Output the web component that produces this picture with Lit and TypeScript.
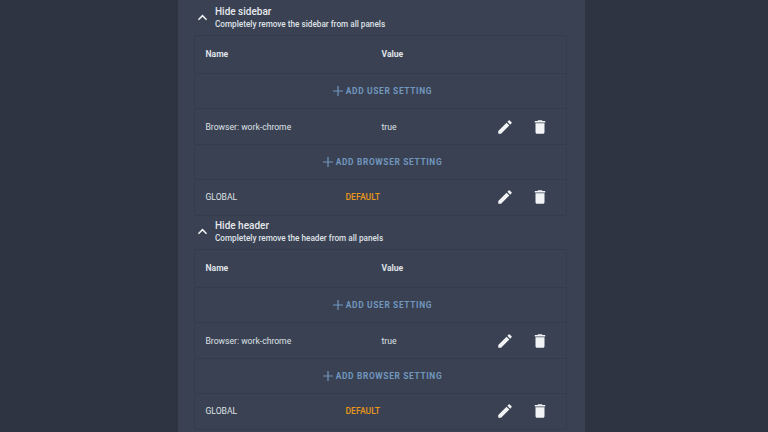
import { LitElement, css, html } from "lit";
import { customElement, property } from "lit/decorators.js";

const pencil = html`<svg viewBox="0 0 24 24" width="18" height="18"><path fill="currentColor" d="M3 17.25V21h3.75L17.81 9.94l-3.75-3.75L3 17.25zM20.71 7.04a1 1 0 0 0 0-1.41l-2.34-2.34a1 1 0 0 0-1.41 0l-1.83 1.83 3.75 3.75 1.83-1.83z"/></svg>`;
const trash = html`<svg viewBox="0 0 24 24" width="18" height="18"><path fill="currentColor" d="M6 19c0 1.1.9 2 2 2h8c1.1 0 2-.9 2-2V7H6v12zM19 4h-3.5l-1-1h-5l-1 1H5v2h14V4z"/></svg>`;
const plus = html`<svg viewBox="0 0 24 24" width="12" height="12"><path fill="currentColor" d="M22 13.2h-8.8V22h-2.4v-8.8H2v-2.4h8.8V2h2.4v8.8H22z"/></svg>`;
const chevron = html`<svg viewBox="0 0 24 24" width="15" height="15"><path fill="none" stroke="currentColor" stroke-width="2.4" d="M5.5 15.5 12 9l6.5 6.5"/></svg>`;

@customElement("setting-block")
export class SettingBlock extends LitElement {
  static styles = css`
    :host {
      display: block;
      height: 214px;
    }
    .head {
      display: flex;
      align-items: center;
      height: 34.5px;
      padding-top: 1px;
      box-sizing: border-box;
    }
    .chevron {
      width: 37px;
      padding-left: 16.5px;
      box-sizing: border-box;
      color: #f2f3f5;
      display: flex;
    }
    .title {
      font-size: 10px;
      font-weight: 500;
      line-height: 13px;
      color: #e6e8ec;
    }
    .sub {
      font-size: 8.2px;
      font-weight: 500;
      line-height: 13px;
      color: #dfe2e7;
    }
    .table {
      margin-left: 16px;
      width: 373px;
      border: 1px solid #343b4a;
      border-radius: 2px;
      box-sizing: border-box;
    }
    .row {
      display: flex;
      align-items: center;
      height: 35.5px;
      border-bottom: 1px solid #343b4a;
      box-sizing: border-box;
      font-size: 8.6px;
      color: #dfe2e7;
      padding-left: 10.5px;
    }
    .row.top {
      height: 38px;
      font-weight: 700;
    }
    .row.item {
      padding-top: 1.5px;
    }
    .row.last {
      height: 35px;
      border-bottom: none;
      padding-bottom: 1px;
    }
    .name {
      width: 176px;
    }
    .value {
      flex: 1;
    }
    .global {
      width: 140px;
    }
    .default {
      color: #e8961a;
      font-weight: 500;
    }
    .actions {
      display: flex;
      gap: 17px;
      color: #f2f3f5;
      margin-left: auto;
      padding-right: 17px;
    }
    .add {
      justify-content: center;
      gap: 2px;
      color: #7197bf;
      font-size: 8.4px;
      font-weight: 700;
      letter-spacing: 0.65px;
      padding-left: 3px;
    }
    .add svg {
      display: block;
    }
  `;

  @property()
  heading = "";

  @property()
  sub = "";

  actions() {
    return html`<div class="actions">${pencil}${trash}</div>`;
  }

  render() {
    return html`
      <div class="head">
        <div class="chevron">${chevron}</div>
        <div>
          <div class="title">${this.heading}</div>
          <div class="sub">${this.sub}</div>
        </div>
      </div>
      <div class="table">
        <div class="row top">
          <div class="name">Name</div>
          <div class="value">Value</div>
        </div>
        <div class="row add">${plus}ADD USER SETTING</div>
        <div class="row item">
          <div class="name">Browser: work-chrome</div>
          <div class="value">true</div>
          ${this.actions()}
        </div>
        <div class="row add">${plus}ADD BROWSER SETTING</div>
        <div class="row last">
          <div class="global">GLOBAL</div>
          <div class="default">DEFAULT</div>
          ${this.actions()}
        </div>
      </div>
    `;
  }
}

@customElement("app-root")
export class AppRoot extends LitElement {
  static styles = css`
    :host {
      display: block;
      width: 768px;
      height: 432px;
      overflow: hidden;
      background: #2e3441;
      font-family: Roboto, "Liberation Sans", sans-serif;
    }
    .panel {
      width: 407px;
      height: 432px;
      margin-left: 178px;
      background: #3a4152;
    }
  `;

  render() {
    return html`
      <div class="panel">
        <setting-block
          heading="Hide sidebar"
          sub="Completely remove the sidebar from all panels"
        ></setting-block>
        <setting-block
          heading="Hide header"
          sub="Completely remove the header from all panels"
        ></setting-block>
      </div>
    `;
  }
}
